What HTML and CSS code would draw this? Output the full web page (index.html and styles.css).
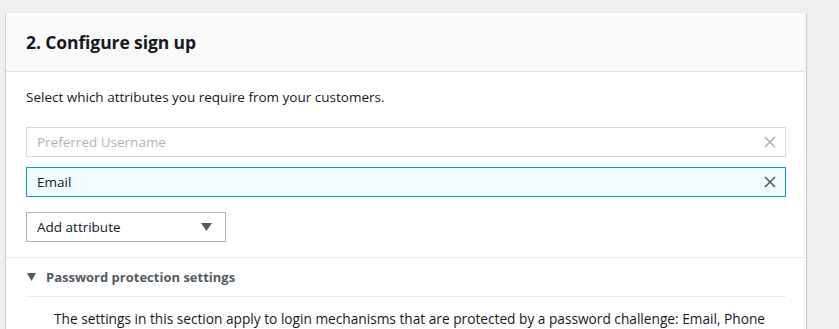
FILE: index.html
```html
<!DOCTYPE html>
<html>
<head>
<meta charset="utf-8">
<link rel="stylesheet" href="styles.css">
</head>
<body>
<div class="page">
  <section class="card">
    <header class="card-header">
      <h2 class="card-title">2. Configure sign up</h2>
    </header>
    <div class="card-body">
      <p class="intro">Select which attributes you require from your customers.</p>
      <div class="field field-muted">
        <span class="placeholder">Preferred Username</span>
        <svg class="clear" width="12" height="12" viewBox="0 0 12 12"><path d="M1 1L11 11M11 1L1 11" stroke="currentColor" stroke-width="1.6" fill="none"/></svg>
      </div>
      <div class="field field-active">
        <span class="value">Email</span>
        <svg class="clear" width="12" height="12" viewBox="0 0 12 12"><path d="M1 1L11 11M11 1L1 11" stroke="currentColor" stroke-width="1.6" fill="none"/></svg>
      </div>
      <div class="select">
        <span>Add attribute</span>
        <svg class="caret" width="11" height="8" viewBox="0 0 11 8"><path d="M0 0H11L5.5 8Z" fill="currentColor"/></svg>
      </div>
    </div>
    <div class="expander">
      <div class="expander-head">
        <svg class="tri" width="9" height="8" viewBox="0 0 9 8"><path d="M0 0H9L4.5 8Z" fill="currentColor"/></svg>
        <span>Password protection settings</span>
      </div>
      <p class="expander-text">The settings in this section apply to login mechanisms that are protected by a password challenge: Email, Phone</p>
    </div>
  </section>
</div>
</body>
</html>
```
FILE: styles.css
```css
html, body {
  margin: 0;
  padding: 0;
  background: #eef0ef;
  height: 100%;
  overflow: hidden;
}
.page {
  padding: 13px 0 0 5px;
  font-family: "Open Sans", "Noto Sans", sans-serif;
  color: #16191f;
}
.card {
  width: 800px;
  background: #ffffff;
  border-left: 1px solid #c8cbca;
  border-right: 1px solid #c8cbca;
  height: 400px;
}
.card-header {
  background: #fafafa;
  border-bottom: 1px solid #e3e4e4;
  height: 58px;
  display: flex;
  align-items: center;
  padding-left: 20px;
}
.card-title {
  margin: 0;
  font-size: 17.5px;
  font-weight: 700;
  color: #16191f;
  letter-spacing: -0.1px;
}
.card-body {
  padding: 15px 20px 15px 20px;
  border-bottom: 1px solid #eaeded;
}
.intro {
  margin: 0 0 20px 0;
  font-size: 13.5px;
  line-height: 20px;
}
.field {
  height: 30px;
  box-sizing: border-box;
  display: flex;
  align-items: center;
  justify-content: space-between;
  padding: 0 9px 0 10px;
  font-size: 13.5px;
  margin-bottom: 10px;
  width: 760px;
}
.field-muted {
  border: 1px solid #d5dbdb;
  color: #aab7b8;
}
.field-active {
  border: 1px solid #00a1c9;
  background: #f1faff;
  color: #545b64;
  margin-bottom: 15px;
}
.field-active .value {
  color: #16191f;
}
.select {
  width: 200px;
  height: 30px;
  box-sizing: border-box;
  border: 1px solid #aab7b8;
  display: flex;
  align-items: center;
  justify-content: space-between;
  padding: 0 13px 0 10px;
  font-size: 13.5px;
  color: #16191f;
}
.caret {
  color: #545b64;
}
.expander {
  padding: 0 20px;
}
.expander-head {
  height: 38px;
  border-bottom: 1px solid #eaeded;
  display: flex;
  align-items: center;
  gap: 10px;
  padding-left: 1px;
  font-size: 13px;
  font-weight: 700;
  color: #545b64;
}
.tri {
  color: #545b64;
}
.expander-text {
  margin: 12px 0 0 28px;
  font-size: 13.7px;
  line-height: 20px;
  color: #16191f;
}
```
